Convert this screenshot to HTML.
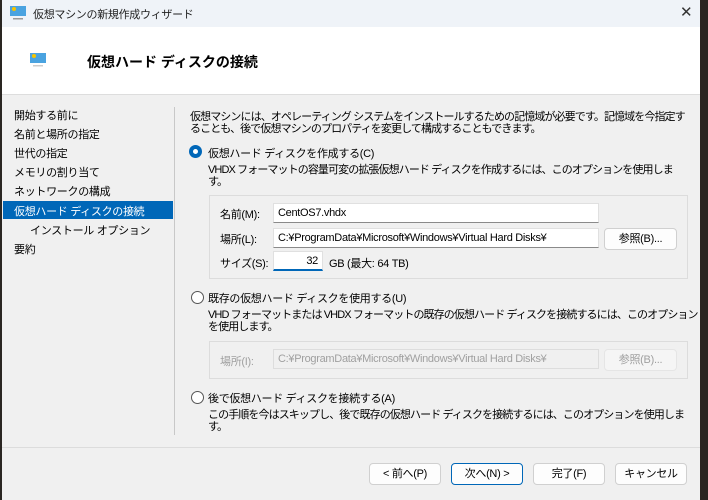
<!DOCTYPE html><html><head><meta charset="utf-8"><style>
*{margin:0;padding:0;box-sizing:border-box}
body{width:708px;height:500px;overflow:hidden;background:#2a2622;font-family:"Liberation Sans","Noto Sans CJK JP",sans-serif;font-size:11px;letter-spacing:-0.3px;color:#000;position:relative}
.a{position:absolute;white-space:nowrap}
.t{letter-spacing:-0.9px}
#win{position:absolute;left:2px;top:0;width:698px;height:500px;background:#f0f0f0;overflow:hidden}
.inp{position:absolute;background:#fff;border:1px solid #e0e0e0;border-bottom:1px solid #8a8a8a;padding:3px 4px;height:20px;font-size:11px}
.btn{position:absolute;background:#fdfdfd;border:1px solid #d0d0d0;border-radius:4px;height:22px;text-align:center;line-height:20px;font-size:11px}
.rad{position:absolute;width:13px;height:13px;border:1px solid #555;border-radius:50%;background:#fff}
.grp{position:absolute;border:1px solid #dcdcdc}
</style></head><body>
<div id="win">
<div class="a" style="left:0;top:0;width:698px;height:27px;background:#eff3f8"></div>
<svg class="a" style="left:8px;top:6px" width="17" height="15"><rect x="0" y="0" width="16" height="10" fill="#4aa3e0"/><circle cx="4" cy="3" r="2" fill="#f5c400"/><rect x="3" y="12" width="10" height="1.5" fill="#999"/></svg>
<div class="a" style="left:31px;top:6px;color:#222">仮想マシンの新規作成ウィザード</div>
<div class="a" style="left:678px;top:3px;font-size:15px;color:#333">✕</div>
<div class="a" style="left:0;top:27px;width:698px;height:68px;background:#fff;border-bottom:1px solid #ddd"></div>
<svg class="a" style="left:28px;top:53px" width="17" height="15"><rect x="0" y="0" width="16" height="10" fill="#4aa3e0"/><circle cx="4" cy="3" r="2" fill="#f5c400"/><rect x="3" y="12" width="10" height="1.5" fill="#ccc"/></svg>
<div class="a" style="left:85px;top:52px;font-size:14px;font-weight:bold;letter-spacing:0">仮想ハード ディスクの接続</div>

<div class="a" style="left:12px;top:107px;line-height:19px">開始する前に<br>名前と場所の指定<br>世代の指定<br>メモリの割り当て<br>ネットワークの構成</div>
<div class="a" style="left:1px;top:201px;width:170px;height:18px;background:#0067b8"></div>
<div class="a" style="left:12px;top:203px;color:#fff">仮想ハード ディスクの接続</div>
<div class="a" style="left:28px;top:222px">インストール オプション</div>
<div class="a" style="left:12px;top:241px">要約</div>
<div class="a" style="left:172px;top:107px;width:1px;height:328px;background:#c8c8c8"></div>

<div class="a t" style="left:188px;top:111px;line-height:12px">仮想マシンには、オペレーティング システムをインストールするための記憶域が必要です。記憶域を今指定す<br>ることも、後で仮想マシンのプロパティを変更して構成することもできます。</div>
<div class="rad" style="left:187px;top:145px;border:4px solid #0067b8"></div>
<div class="a" style="left:206px;top:145px">仮想ハード ディスクを作成する(C)</div>
<div class="a t" style="left:206px;top:164px;line-height:12px">VHDX フォーマットの容量可変の拡張仮想ハード ディスクを作成するには、このオプションを使用しま<br>す。</div>
<div class="grp" style="left:207px;top:195px;width:479px;height:84px"></div>
<div class="a" style="left:218px;top:206px">名前(M):</div>
<div class="inp" style="left:271px;top:203px;width:326px">CentOS7.vhdx</div>
<div class="a" style="left:218px;top:231px">場所(L):</div>
<div class="inp" style="left:271px;top:228px;width:326px">C:¥ProgramData¥Microsoft¥Windows¥Virtual Hard Disks¥</div>
<div class="btn" style="left:602px;top:228px;width:73px">参照(B)...</div>
<div class="a" style="left:218px;top:255px">サイズ(S):</div>
<div class="inp" style="left:271px;top:251px;width:50px;text-align:right;border-bottom:2px solid #0067b8">32</div>
<div class="a" style="left:327px;top:255px">GB (最大: 64 TB)</div>

<div class="rad" style="left:189px;top:291px"></div>
<div class="a" style="left:206px;top:290px">既存の仮想ハード ディスクを使用する(U)</div>
<div class="a t" style="left:206px;top:309px;line-height:12px">VHD フォーマットまたは VHDX フォーマットの既存の仮想ハード ディスクを接続するには、このオプション<br>を使用します。</div>
<div class="grp" style="left:207px;top:341px;width:479px;height:38px"></div>
<div class="a" style="left:218px;top:353px;color:#a0a0a0">場所(I):</div>
<div class="inp" style="left:271px;top:349px;width:326px;background:#f0f0f0;color:#a0a0a0;border-color:#ddd">C:¥ProgramData¥Microsoft¥Windows¥Virtual Hard Disks¥</div>
<div class="btn" style="left:602px;top:349px;width:73px;color:#a0a0a0;background:#f5f5f5;border-color:#e5e5e5">参照(B)...</div>

<div class="rad" style="left:189px;top:391px"></div>
<div class="a" style="left:206px;top:390px">後で仮想ハード ディスクを接続する(A)</div>
<div class="a t" style="left:206px;top:409px;line-height:12px">この手順を今はスキップし、後で既存の仮想ハード ディスクを接続するには、このオプションを使用しま<br>す。</div>

<div class="a" style="left:0;top:447px;width:698px;height:1px;background:#dcdcdc"></div>
<div class="btn" style="left:367px;top:463px;width:72px">&lt; 前へ(P)</div>
<div class="btn" style="left:449px;top:463px;width:72px;border:1.5px solid #0067b8">次へ(N) &gt;</div>
<div class="btn" style="left:531px;top:463px;width:72px">完了(F)</div>
<div class="btn" style="left:613px;top:463px;width:72px">キャンセル</div>
</div>
</body></html>
